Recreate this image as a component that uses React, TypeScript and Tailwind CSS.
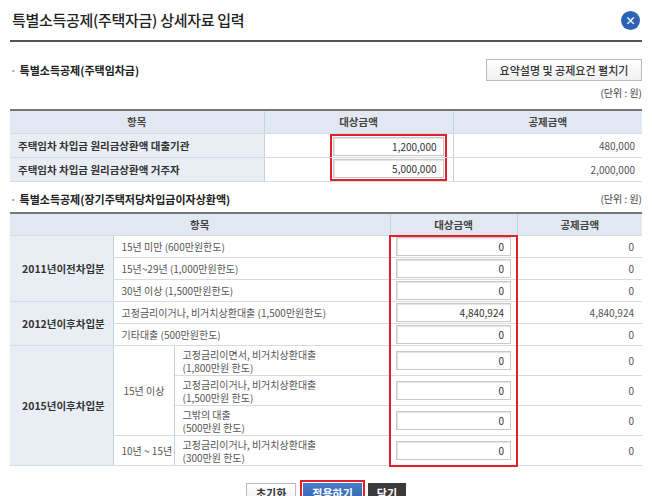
import React from "react";

const F = { fontFamily: '"Noto Sans CJK KR", "Noto Sans", sans-serif' };

function Inp({ v }: { v: string }) {
  return (
    <div className="h-[19px] w-full border border-[#c8c8c8] bg-white text-right pr-[6px] text-[10px] leading-[17px] text-[#333] shadow-[inset_1px_1px_1px_#e4e4e4]">{v}</div>
  );
}

export default function App() {
  const cell = "border-b border-[#d5dce6] p-0";
  const br = "border-r border-r-[#c8d0dc]";
  const r2 = [
    { a: "15년 미만 (600만원한도)", v: "0", d: "0" },
    { a: "15년~29년 (1,000만원한도)", v: "0", d: "0" },
    { a: "30년 이상 (1,500만원한도)", v: "0", d: "0" },
  ];
  return (
    <div style={F} className="w-[652px] h-[496px] bg-white text-[#333] relative px-[10px] overflow-hidden">
      <div className="flex items-center justify-between h-[42px] border-b-2 border-[#555] pl-[2px] pr-[2px]">
        <div className="text-[15px] text-[#222] font-medium tracking-[-0.3px]">특별소득공제(주택자금) 상세자료 입력</div>
        <div className="w-[19px] h-[19px] rounded-full bg-[#2e63b4] text-white text-[11px] leading-[19px] text-center font-bold">×</div>
      </div>
      <div className="flex items-center justify-between mt-[17px]">
        <div className="text-[11px] font-bold text-[#222] leading-[14px]"><span className="text-[#999] mr-[3px]">·</span>특별소득공제(주택임차금)</div>
        <div className="h-[22px] w-[156px] border border-[#bbb] bg-gradient-to-b from-white to-[#f0f0f0] text-[11px] font-medium text-center leading-[20px]">요약설명 및 공제요건 펼치기</div>
      </div>
      <div className="text-right text-[10px] leading-[14px] mt-[5px] mb-[9px] text-[#444]">(단위 : 원)</div>
      <table className="w-full table-fixed border-collapse border-t-2 border-[#777] text-[10.5px] leading-[13px]">
        <colgroup><col className="w-[254px]" /><col className="w-[189px]" /><col /></colgroup>
        <tbody>
          <tr className="h-[23px] bg-[#e2e8f1] font-bold text-[#444]">
            <td className={`${cell} ${br} text-center`}>항목</td>
            <td className={`${cell} ${br} text-center`}>대상금액</td>
            <td className={`${cell} text-center`}>공제금액</td>
          </tr>
          {[["주택임차 차입금 원리금상환액 대출기관", "1,200,000", "480,000"], ["주택임차 차입금 원리금상환액 거주자", "5,000,000", "2,000,000"]].map((r, i) => (
            <tr key={i} className="h-[22px]">
              <td className={`${cell} bg-[#e9eef5] ${br} pl-[8px] font-bold text-[#333]`}>{r[0]}</td>
              <td className={`${cell} ${br}`}>
                <div className={`ml-[65px] mr-[6px] ${i === 0 ? "border-t-2 pt-[1px] pb-[1px]" : "border-b-2 pb-[1px] pt-[1px]"} border-x-2 border-[#e0202a] px-[1px]`}><Inp v={r[1]} /></div>
              </td>
              <td className={`${cell} text-right pr-[7px] text-[10px] text-[#555]`}>{r[2]}</td>
            </tr>
          ))}
        </tbody>
      </table>
      <div className="flex items-center justify-between mt-[10px] mb-[6px] leading-[14px]">
        <div className="text-[11px] font-bold text-[#222]"><span className="text-[#999] mr-[3px]">·</span>특별소득공제(장기주택저당차입금이자상환액)</div>
        <div className="text-[10px] text-[#444]">(단위 : 원)</div>
      </div>
      <table className="w-full table-fixed border-collapse border-t-2 border-[#777] text-[10px] leading-[13px]">
        <colgroup><col className="w-[103px]" /><col className="w-[61px]" /><col className="w-[216px]" /><col className="w-[127px]" /><col /></colgroup>
        <tbody>
          <tr className="h-[23px] bg-[#e2e8f1] font-bold text-[#444] text-[10.5px]">
            <td colSpan={3} className={`${cell} ${br} text-center`}>항목</td>
            <td className={`${cell} ${br} text-center`}>대상금액</td>
            <td className={`${cell} text-center`}>공제금액</td>
          </tr>
          {r2.map((r, i) => (
            <tr key={i} className="h-[22px]">
              {i === 0 && <td rowSpan={3} className={`${cell} bg-[#e9eef5] ${br} pl-[12px] font-bold text-[10.5px]`}>2011년이전차입분</td>}
              <td colSpan={2} className={`${cell} ${br} pl-[8px] text-[#555]`}>{r.a}</td>
              <td className={`${cell} px-[5px] border-x-2 border-x-[#e0202a] ${i === 0 ? "border-t-2 border-t-[#e0202a]" : ""}`}><Inp v={r.v} /></td>
              <td className={`${cell} text-right pr-[8px] text-[#555]`}>{r.d}</td>
            </tr>
          ))}
          {[["고정금리이거나, 비거치상환대출 (1,500만원한도)", "4,840,924", "4,840,924"], ["기타대출 (500만원한도)", "0", "0"]].map((r, i) => (
            <tr key={i} className="h-[22px]">
              {i === 0 && <td rowSpan={2} className={`${cell} bg-[#e9eef5] ${br} pl-[12px] font-bold text-[10.5px]`}>2012년이후차입분</td>}
              <td colSpan={2} className={`${cell} ${br} pl-[8px] text-[#555]`}>{r[0]}</td>
              <td className={`${cell} px-[5px] border-x-2 border-x-[#e0202a]`}><Inp v={r[1]} /></td>
              <td className={`${cell} text-right pr-[8px] text-[#555]`}>{r[2]}</td>
            </tr>
          ))}
          {[["고정금리이면서, 비거치상환대출", "(1,800만원 한도)"], ["고정금리이거나, 비거치상환대출", "(1,500만원 한도)"], ["그밖의 대출", "(500만원 한도)"], ["고정금리이거나, 비거치상환대출", "(300만원 한도)"]].map((r, i) => (
            <tr key={i} className="h-[30px]">
              {i === 0 && <td rowSpan={4} className={`${cell} bg-[#e9eef5] ${br} pl-[12px] font-bold text-[10.5px]`}>2015년이후차입분</td>}
              {i === 0 && <td rowSpan={3} className={`${cell} ${br} pl-[10px] text-[#555]`}>15년 이상</td>}
              {i === 3 && <td className={`${cell} ${br} pl-[8px] text-[#555] whitespace-nowrap`}>10년 ~ 15년</td>}
              <td className={`${cell} ${br} pl-[8px] text-[#555] leading-[13px]`}>{r[0]}<br />{r[1]}</td>
              <td className={`${cell} px-[5px] border-x-2 border-x-[#e0202a] ${i === 3 ? "border-b-2 border-b-[#e0202a]" : ""}`}><Inp v="0" /></td>
              <td className={`${cell} text-right pr-[8px] text-[#555]`}>0</td>
            </tr>
          ))}
        </tbody>
      </table>
      <div className="flex justify-center items-center gap-[3px] mt-[13px]">
        <div className="h-[21px] px-[9px] border border-[#bbb] bg-gradient-to-b from-white to-[#eee] text-[11px] font-bold leading-[19px] mr-[1px]">초기화</div>
        <div className="border-2 border-[#e0202a] p-[1px]">
          <div className="h-[21px] px-[9px] bg-gradient-to-b from-[#4a7fcc] to-[#2c5ea8] text-white text-[11px] font-bold leading-[21px]">적용하기</div>
        </div>
        <div className="h-[21px] px-[9px] bg-[#3a3a3a] text-white text-[11px] font-bold leading-[21px]">닫기</div>
      </div>
    </div>
  );
}
